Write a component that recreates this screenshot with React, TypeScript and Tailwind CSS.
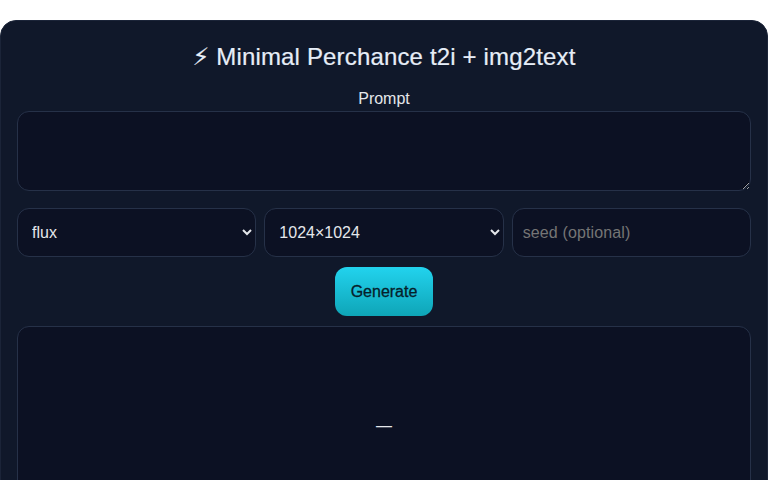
export default function App() {
  return (
    <div className="min-h-screen bg-white pt-5 font-['Liberation_Sans',sans-serif]">
      <div className="rounded-2xl border border-[#1b2438] bg-[#10182a] p-4 text-[#e5e7eb]">
        <h1 className="mb-[19px] mt-[6px] text-center text-2xl font-normal leading-[28px] tracking-[0.16px] text-[#e6edf7] [-webkit-text-stroke:0.2px_#e6edf7]">
          <span className="font-['DejaVu_Sans',sans-serif]">{"\u26A1\uFE0E"}</span> Minimal Perchance t2i + img2text
        </h1>

        <label htmlFor="prompt" className="block text-center text-base leading-[18px]">
          Prompt
        </label>
        <textarea
          id="prompt"
          className="mt-[3px] block h-20 w-full rounded-xl border border-[#263148] bg-[#0c1123] p-2.5 text-[#e5e7eb] outline-none"
        />

        <div className="mt-[17px] grid grid-cols-3 gap-2">
          <select className="h-[49px] w-full rounded-xl border border-[#263148] bg-[#0c1123] px-2.5 text-base text-[#e5e7eb] outline-none">
            <option>flux</option>
            <option>turbo</option>
          </select>
          <select className="h-[49px] w-full rounded-xl border border-[#263148] bg-[#0c1123] px-2.5 text-base text-[#e5e7eb] outline-none">
            <option>1024×1024</option>
            <option>768×768</option>
          </select>
          <input
            placeholder="seed (optional)"
            className="h-[49px] w-full rounded-xl border border-[#263148] bg-[#0c1123] px-2.5 text-base tracking-[0.13px] text-[#e5e7eb] outline-none placeholder:text-[#757575]"
          />
        </div>

        <div className="mt-2.5 flex justify-center">
          <button className="h-[49px] w-[98px] rounded-xl bg-gradient-to-b from-[#22d3ee] to-[#0ea5b7] text-base font-normal text-[#06202a] [-webkit-text-stroke:0.3px_#06202a]">
            Generate
          </button>
        </div>

        <div className="mt-2.5 flex h-[200px] items-center justify-center rounded-xl border border-[#263148] bg-[#0c1123] text-base">
          —
        </div>
      </div>
    </div>
  );
}
